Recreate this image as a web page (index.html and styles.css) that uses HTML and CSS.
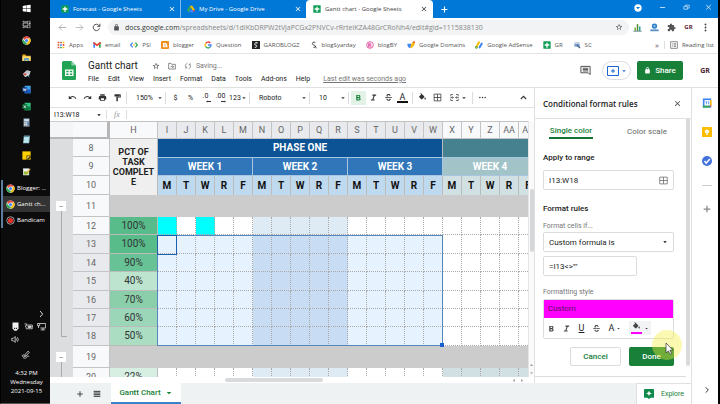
FILE: index.html
```html
<!DOCTYPE html>
<html lang="en">
<head>
<meta charset="utf-8">
<title>Gantt chart - Google Sheets</title>
<link rel="stylesheet" href="styles.css">
</head>
<body>
<svg class="defs" aria-hidden="true">
  <symbol id="chrome" viewBox="0 0 24 24"><circle cx="12" cy="12" r="11" fill="#fff"/><path d="M12 1a11 11 0 0 1 9.6 5.6H12a5.5 5.5 0 0 0-5.2 3.8L2.6 6.300A11 11 0 0 1 12 1z" fill="#ea4335"/><path d="M21.900 7.200A11 11 0 0 1 11.500 23l5-8.200a5.500 5.500 0 0 0-.6-7.600z" fill="#fbbc04"/><path d="M2.100 7.200A11 11 0 0 0 11 23l4-6.500a5.500 5.500 0 0 1-7.800-1.600z" fill="#34a853"/><circle cx="12" cy="12" r="4.300" fill="#4285f4"/></symbol>
  <symbol id="sheet" viewBox="0 0 24 24"><rect x="1" y="1" width="22" height="22" rx="1" fill="#0f9d58"/><path d="M10 5h4v5h5v4h-5v6h-4v-6H5v-4h5z" fill="#fff"/></symbol>
  <symbol id="drop" viewBox="0 0 24 24"><path d="M5 9l7 7 7-7z"/></symbol>
  <symbol id="close" viewBox="0 0 24 24"><path d="M19 6.400 17.600 5 12 10.600 6.400 5 5 6.400 10.600 12 5 17.600 6.400 19 12 13.400 17.600 19 19 17.600 13.400 12z"/></symbol>
  <symbol id="plus" viewBox="0 0 24 24"><path d="M20 13.500h-6.500V20h-3v-6.500H4v-3h6.500V4h3v6.500H20z"/></symbol>
  <symbol id="star" viewBox="0 0 24 24"><path d="M22 9.240l-7.190-.62L12 2 9.190 8.630 2 9.240l5.460 4.730L5.820 21 12 17.270 18.180 21l-1.630-7.030L22 9.240zM12 15.400l-3.760 2.270 1-4.280-3.320-2.880 4.380-.38L12 6.100l1.710 4.040 4.380.38-3.320 2.880 1 4.280L12 15.400z"/></symbol>
  <symbol id="lock" viewBox="0 0 24 24"><path d="M18 8h-1V6A5 5 0 0 0 7 6v2H6a2 2 0 0 0-2 2v10c0 1.100.9 2 2 2h12a2 2 0 0 0 2-2V10a2 2 0 0 0-2-2zM9 6a3 3 0 0 1 6 0v2H9z"/></symbol>
  <symbol id="fill" viewBox="0 0 24 24"><path d="M16.560 8.940L7.620 0 6.210 1.410l2.380 2.380-5.150 5.150a1.490 1.490 0 0 0 0 2.120l5.500 5.500c.29.29.68.44 1.060.44s.77-.15 1.060-.44l5.500-5.500c.59-.58.59-1.530 0-2.120zM19 11.500s-2 2.170-2 3.500a2 2 0 0 0 4 0c0-1.330-2-3.500-2-3.500z"/></symbol>
  <symbol id="strike" viewBox="0 0 24 24"><path d="M3 11h18v2H3zM17.500 7.500h-2.800c0-1.500-1-2.300-2.700-2.300-1.500 0-2.500.7-2.500 1.800 0 1 .8 1.600 2.500 2H7.300c-.5-.6-.7-1.300-.7-2 0-2.500 2.200-4.200 5.400-4.200 3.400 0 5.500 1.800 5.500 4.700zM6.300 15.500H9c.1 1.700 1.200 2.500 3.200 2.500 1.700 0 2.700-.7 2.700-1.800 0-.5-.1-.9-.5-1.200h3c.2.400.3.900.3 1.400 0 2.500-2.100 4.100-5.500 4.100-3.700 0-5.900-1.900-5.900-5z"/></symbol>
  <symbol id="italic" viewBox="0 0 24 24"><path d="M9 4v3h3.200l-3.400 10H5v3h10v-3h-3.200l3.400-10H19V4z"/></symbol>
  <symbol id="bold" viewBox="0 0 24 24"><path d="M15.600 11.800c1-.7 1.600-1.800 1.600-2.800 0-2.300-1.700-4-4-4H6v15h8c2.200 0 3.800-1.700 3.800-3.900 0-1.900-1-3.500-2.200-4.300zM9.300 7.500h3.200a1.500 1.500 0 0 1 0 3H9.300zm3.700 9.800H9.300v-3.500H13a1.700 1.700 0 0 1 0 3.500z"/></symbol>
  <symbol id="undo" viewBox="0 0 24 24"><path d="M12.500 8c-2.650 0-5.050.99-6.900 2.600L2 7v9h9l-3.620-3.620A8 8 0 0 1 12.500 10.500c3.540 0 6.550 2.310 7.600 5.500l2.370-.78A10.500 10.500 0 0 0 12.500 8z"/></symbol>
</svg>

<div class="desktop">
  <aside class="taskbar">
    <ul class="apps">
      <li><svg viewBox="0 0 24 24" fill="#fff"><path d="M2 5l9-1.500V11.500H2zM12 3.300 23 2v9.500H12zM2 12.500h9v8L2 19zM12 12.500h11V22l-11-1.500z"/></svg></li>
      <li><svg viewBox="0 0 24 24" fill="none" stroke="#ddd" stroke-width="2"><path d="M3 2v3h13V2M3 22v-3h13v3M3 8h13v8H3zM21 2v20M19 9h4"/></svg></li>
      <li><svg><use href="#chrome"/></svg></li>
      <li><svg viewBox="0 0 24 24"><path d="M1 4h8l2 3h12v14H1z" fill="#e8a920"/><path d="M1 9h22v12H1z" fill="#ffdb70"/><path d="M6 14h12v7h-3v-3H9v3H6z" fill="#2f8fd8"/></svg></li>
      <li><svg viewBox="0 0 24 24"><path d="M2 13 13 3l10 3-4 11-11 4z" fill="#dfe3e8"/><path d="M7 9l9-5 6 4-6 5z" fill="#b9bfc8"/><path d="M3 13c4-3 8-2 9 1s-3 4-8 2z" fill="#d14a3a"/><path d="M14 17l6 5" stroke="#5aa6d8" stroke-width="2"/></svg></li>
      <li><svg viewBox="0 0 24 24"><path d="M7 2h16v20H7z" fill="#41a5ee"/><path d="M7 12h16v10H7z" fill="#185abd"/><path d="M1 6h13v12H1z" fill="#103f91"/><path d="M3.500 9 5.500 15.500 7.500 10 9.500 15.500 11.500 9" fill="none" stroke="#fff" stroke-width="1.800"/></svg></li>
      <li><svg viewBox="0 0 24 24"><path d="M7 2h16v20H7z" fill="#33c481"/><path d="M7 12h16v10H7z" fill="#107c41"/><path d="M1 6h13v12H1z" fill="#0b6a37"/><path d="M4.500 9l6 7M10.500 9l-6 7" stroke="#fff" stroke-width="2"/></svg></li>
      <li><svg viewBox="0 0 24 24"><path d="M4 1h16v22H4z" fill="#8a9aa8"/><path d="M6 3h12v5H6z" fill="#c8e4f4"/><path d="M6 11h3v3H6zM11 11h3v3h-3zM6 16h3v3H6zM11 16h3v3h-3z" fill="#fff"/><path d="M15 11h3v8h-3z" fill="#3b78b5"/></svg></li>
      <li><svg viewBox="0 0 24 24"><path d="M5 2h16l-2 20H3z" fill="#a7dbe8"/><path d="M5 2h16v3H5z" fill="#5a8794"/><path d="M6 9h11M6 13h11M5 17h11" stroke="#dff4f8" stroke-width="1.500"/></svg></li>
      <li><svg viewBox="0 0 24 24"><path d="M1 1h22v22H1z" fill="#ffcf01"/><path d="M12 12h11v5l-6 6h-5z" fill="#3a3000"/><path d="M14 14h7l-7 7z" fill="#ffe471"/></svg></li>
      <li><svg viewBox="0 0 24 24"><path d="M3 3h16v19H3z" fill="#f2f4ea"/><path d="M5 12h12v8H5z" fill="#8dbb35"/><path d="M10 16 21 4l2 2-10 12z" fill="#e0ad35"/><path d="M3 3h16v2H3z" fill="#718090"/></svg></li>
    </ul>
    <ul class="windows">
      <li><svg><use href="#chrome"/></svg><span>Blogger: ...</span></li>
      <li class="current"><svg><use href="#chrome"/></svg><span>Gantt ch...</span></li>
      <li><svg viewBox="0 0 24 24"><circle cx="12" cy="12" r="10" fill="none" stroke="#ccc" stroke-width="2"/><circle cx="12" cy="12" r="7" fill="#e0302a"/></svg><span>Bandicam</span></li>
    </ul>
    <div class="tray">
      <svg class="tray-end" viewBox="0 0 24 24" fill="none" stroke="#fff" stroke-width="2.500"><path d="M9 3l8 9-8 9"/></svg>
      <svg viewBox="0 0 24 24"><path d="M4 1h16v16l-5 6H9l-5-6z" fill="#f0f0f0"/><path d="M8 17h3M13 17h3" stroke="#222" stroke-width="3"/></svg>
      <svg viewBox="0 0 24 24" fill="none" stroke="#ddd" stroke-width="2"><path d="M8 8h14v10H6v-4M22 11h2M1 5h6v5H4v4"/><path d="M11 11h8v4h-8z" fill="#ddd"/></svg>
      <svg viewBox="0 0 24 24" fill="none" stroke="#eee" stroke-width="2"><path d="M7 4h16v12H9M16 16v5M10 21h11M1 4h6v6H1zM4 10v6"/></svg>
      <svg viewBox="0 0 24 24" fill="none" stroke="#eee" stroke-width="2"><path d="M2 9h4l5-5v16l-5-5H2zM14 9q2 3 0 6M17 6q5 6 0 12"/></svg>
      <svg class="tray-pen" viewBox="0 0 24 24" fill="none" stroke="#eee" stroke-width="2"><path d="M9 14 19 3l3 3-9 11zM9 14c-3-3-7 0-5 3s7 1 9-3M6 21c4 2 8 1 10-3 1-3 5-3 5 0"/></svg>
    </div>
    <div class="clock"><span>4:32 PM</span><span>Wednesday</span><span>2021-09-15</span></div>
  </aside>

  <div class="browser">
    <nav class="tabs" aria-label="Browser tabs">
      <div class="tab"><svg><use href="#sheet"/></svg><span>Forecast - Google Sheets</span><button aria-label="Close tab"><svg><use href="#close"/></svg></button></div>
      <div class="tab divided"><svg viewBox="0 0 24 24"><path d="M8 2h8l8 13h-8z" fill="#fbbc04"/><path d="M8 2 0 15l4 7 8-13z" fill="#34a853"/><path d="M8 15h16l-4 7H4z" fill="#4285f4"/><path d="M18 15h6l-4 7z" fill="#ea4335"/></svg><span>My Drive - Google Drive</span><button aria-label="Close tab"><svg><use href="#close"/></svg></button></div>
      <div class="tab active"><svg><use href="#sheet"/></svg><span>Gantt chart - Google Sheets</span><button aria-label="Close tab"><svg><use href="#close"/></svg></button></div>
      <button class="new-tab" aria-label="New tab"><svg><use href="#plus"/></svg></button>
      <div class="window-buttons">
        <button aria-label="Search tabs"><svg viewBox="0 0 24 24"><circle cx="12" cy="12" r="11" fill="#fff"/><path d="M6 9h12l-6 7z" fill="#0078d7"/></svg></button>
        <button aria-label="Minimize"><svg viewBox="0 0 24 24" stroke="#fff" stroke-width="2.500"><path d="M3 12h18"/></svg></button>
        <button aria-label="Restore"><svg viewBox="0 0 24 24" fill="none" stroke="#fff" stroke-width="2"><path d="M3 8h12v10H3zM8 8V4h13v10h-6"/></svg></button>
        <button aria-label="Close"><svg viewBox="0 0 24 24" stroke="#fff" stroke-width="2.500"><path d="M4 3l16 16M20 3 4 19"/></svg></button>
      </div>
    </nav>

    <div class="address">
      <button aria-label="Back"><svg viewBox="0 0 24 24" fill="none" stroke="#999" stroke-width="2"><path d="M22 12H3M11 4l-8 8 8 8"/></svg></button>
      <button aria-label="Forward"><svg viewBox="0 0 24 24" fill="none" stroke="#aaa" stroke-width="2"><path d="M2 12h19M13 4l8 8-8 8"/></svg></button>
      <button aria-label="Reload"><svg viewBox="0 0 24 24" fill="none" stroke="#444" stroke-width="2.500"><path d="M20 14a8.500 8.500 0 1 1-2-8l3 3M21 2v7h-7"/></svg></button>
      <div class="omnibox"><svg fill="#555"><use href="#lock"/></svg><p><b>docs.google.com</b>/spreadsheets/d/1dIKbDRPW2tVjaPCGx2PNVCv-rRrteiKZA48GrCRoNh4/edit#gid=1115838130</p><svg fill="#555"><use href="#star"/></svg></div>
      <div class="extensions">
        <svg viewBox="0 0 24 24"><path d="M4 12h4v9H4z" fill="#7cb342"/><path d="M10 3h4v18h-4z" fill="#558b2f"/><path d="M16 9h4v12h-4z" fill="#26a69a"/><path d="M1 22h22" stroke="#546e7a" stroke-width="2"/></svg>
        <svg viewBox="0 0 24 24"><circle cx="12" cy="8" r="7" fill="#2b7bc4"/><circle cx="12" cy="8" r="3" fill="#9cc9ef"/><path d="M1 17h22v5H1z" fill="#5a93c8"/></svg>
        <svg viewBox="0 0 24 24" fill="#555"><path d="M20.500 11H19V7a2 2 0 0 0-2-2h-4V3.500a2.500 2.500 0 0 0-5 0V5H4a2 2 0 0 0-2 2v3.800h1.500a2.700 2.700 0 0 1 0 5.400H2V20c0 1.100.9 2 2 2h3.800v-1.500a2.700 2.700 0 0 1 5.400 0V22H17a2 2 0 0 0 2-2v-4h1.500a2.500 2.500 0 0 0 0-5z"/></svg>
        <span class="gr-small">GR</span>
        <svg viewBox="0 0 24 24" fill="#444"><circle cx="12" cy="4" r="2.500"/><circle cx="12" cy="12" r="2.500"/><circle cx="12" cy="20" r="2.500"/></svg>
      </div>
    </div>

    <nav class="bookmarks" aria-label="Bookmarks">
      <a href="#"><svg viewBox="0 0 24 24"><path d="M2 2h5v5H2zM2 17h5v5H2zM17 9h5v5h-5z" fill="#ea4335"/><path d="M9.500 2h5v5h-5zM2 9.500h5v5H2z" fill="#c0662a"/><path d="M17 2h5v5h-5zM17 17h5v5h-5z" fill="#fbbc04"/><path d="M9.500 9.500h5v5h-5z" fill="#4285f4"/><path d="M9.500 17h5v5h-5z" fill="#34a853"/></svg>Apps</a>
      <a href="#"><svg viewBox="0 0 24 24"><path d="M1 4h5v16H1z" fill="#4285f4"/><path d="M18 4h5v16h-5z" fill="#34a853"/><path d="M1 4h4l7 6 7-6h4v4l-11 8L1 8z" fill="#ea4335"/></svg>email</a>
      <a href="#"><svg viewBox="0 0 24 24" fill="none" stroke-width="4"><path d="M8 5l-6 7 6 7" stroke="#4285f4"/><path d="M16 5l6 7-6 7" stroke="#34a853"/><path d="M10 12h4" stroke="#fbbc04"/></svg>PSI</a>
      <a href="#"><svg viewBox="0 0 24 24"><rect width="24" height="24" rx="2" fill="#f09021"/><path d="M6 6h8q3 0 3 4 2 1 2 3v6H6z" fill="#fff"/><path d="M9 10h5M9 15h6" stroke="#f09021" stroke-width="2"/></svg>blogger</a>
      <a href="#"><svg viewBox="0 0 24 24" fill="none" stroke-width="4"><path d="M19 6a9 9 0 0 0-14 1" stroke="#ea4335"/><path d="M5 7a9 9 0 0 0 0 10" stroke="#fbbc04"/><path d="M5 17a9 9 0 0 0 13 2" stroke="#34a853"/><path d="M18 19a9 9 0 0 0 3-7h-9" stroke="#4285f4"/></svg>Question</a>
      <a href="#"><svg viewBox="0 0 24 24"><path d="M0 0h24v24H0z" fill="#222"/><path d="M15 5q-7-1-7 4t6 4v4q0 3-6 2M15 3v5" fill="none" stroke="#fff" stroke-width="2.500"/></svg>GAROBLOGZ</a>
      <a href="#"><svg viewBox="0 0 24 24" fill="none" stroke="#333" stroke-width="2.500"><path d="M16 4q-9-3-9 4c0 5 9 3 9 8q0 4-6 3M16 15l3 7"/></svg>blogSyarday</a>
      <a href="#"><svg viewBox="0 0 24 24" fill="none" stroke="#e0459b" stroke-width="2.500"><circle cx="12" cy="12" r="10"/><path d="M8 7h5q3 2 0 5H8zM8 12h6q3 3 0 6H8z"/></svg>blogBY</a>
      <a href="#"><svg viewBox="0 0 24 24"><path d="M1 8h12l-3 14q-9-3-9-14z" fill="#4285f4"/><path d="M13 8 23 0v8q-2 10-13 14z" fill="#fbbc04"/><path d="M15 4 23 0v6z" fill="#ea4335"/></svg>Google Domains</a>
      <a href="#"><svg viewBox="0 0 24 24" fill="none" stroke-linecap="round" stroke-width="6"><path d="M12 4 4 19" stroke="#fbbc04"/><path d="M20 8l-6 11" stroke="#4285f4"/><circle cx="4" cy="19" r="1" stroke="#34a853"/></svg>Google AdSense</a>
      <a href="#"><svg><use href="#sheet"/></svg>GR</a>
      <a href="#"><svg viewBox="0 0 24 24"><path d="M4 8h16v9H4z" fill="#7b9fd0"/><path d="M2 8 7 3h10l5 5z" fill="#c2cddd"/><path d="M12 12l9 9" stroke="#47668f" stroke-width="4"/></svg>SC</a>
      <a href="#" class="reading"><span class="more">»</span><svg viewBox="0 0 24 24" fill="none" stroke="#555" stroke-width="2"><path d="M2 2h20v20H2zM6 8h2M11 8h7M6 12h2M11 12h7M6 16h2M11 16h7"/></svg>Reading list</a>
    </nav>

    <header class="doc">
      <svg class="logo" viewBox="0 0 28 38"><path d="M3 0h16l9 9v26q0 3-3 3H3q-3 0-3-3V3q0-3 3-3z" fill="#23a455"/><path d="M19 0l9 9h-9z" fill="#8ed1b1"/><path d="M6 17h17v13H6zM8.500 19.500v3h4.700v-3zM15.700 19.500v3h4.700v-3zM8.500 24.800v3h4.700v-3zM15.700 24.800v3h4.700v-3z" fill="#fff" fill-rule="evenodd"/></svg>
      <div class="doc-main">
        <div class="doc-title">
          <h1>Gantt chart</h1>
          <svg fill="#444"><use href="#star"/></svg>
          <svg viewBox="0 0 24 24" fill="none" stroke="#555" stroke-width="2"><path d="M2 4h7l2 3h11v14H2zM8 14h8M13 10l4 4-4 4"/></svg>
          <span class="saving"><svg viewBox="0 0 24 24" fill="none" stroke="#777" stroke-width="2"><path d="M10 4a8 8 0 0 0-4 13M3 18h5v-5M14 20a8 8 0 0 0 4-13M21 6h-5v5"/></svg>Saving...</span>
        </div>
        <nav class="menu"><a href="#">File</a><a href="#">Edit</a><a href="#">View</a><a href="#">Insert</a><a href="#">Format</a><a href="#">Data</a><a href="#">Tools</a><a href="#">Add-ons</a><a href="#">Help</a><a href="#" class="last-edit">Last edit was seconds ago</a></nav>
      </div>
      <button class="comment" aria-label="Comments"><svg viewBox="0 0 24 24" fill="none" stroke="#444" stroke-width="2"><path d="M2 3h20v18l-4-4H2zM6 7h12M6 10h12M6 13h12"/></svg></button>
      <button class="present" aria-label="Present"><svg viewBox="0 0 24 20" fill="none" stroke="#1a67d2" stroke-width="2"><path d="M1 1h22v18H1zM12 6v8M8 10h8"/></svg><svg class="arrow" fill="#1a67d2"><use href="#drop"/></svg></button>
      <button class="share"><svg fill="#fff"><use href="#lock"/></svg>Share</button>
      <span class="avatar">GR</span>
    </header>

    <div class="workspace">
      <div class="editor">
        <div class="editor-main">
          <main class="sheet">
            <div class="toolbar">
              <button aria-label="Undo"><svg><use href="#undo"/></svg></button>
              <button aria-label="Redo"><svg class="flip"><use href="#undo"/></svg></button>
              <button aria-label="Print"><svg viewBox="0 0 24 24"><path d="M19 8H5a3 3 0 0 0-3 3v6h4v4h12v-4h4v-6a3 3 0 0 0-3-3zm-3 11H8v-5h8zM18 3H6v4h12z"/></svg></button>
              <button aria-label="Paint format"><svg viewBox="0 0 24 24"><path d="M18 4V3H4v6h14V6h1v4H9v12h4V12h8V4z"/></svg></button>
              <i></i>
              <button class="pick zoom">150%<svg class="arrow"><use href="#drop"/></svg></button>
              <i></i>
              <button>$</button><button>%</button>
              <button class="decimal" aria-label="Decrease decimals">.0<svg viewBox="0 0 24 10"><path d="M0 5l7-5v3h17v4H7v3z"/></svg></button>
              <button class="decimal" aria-label="Increase decimals">.00<svg viewBox="0 0 24 10"><path d="M24 5l-7-5v3H0v4h17v3z"/></svg></button>
              <button class="formats">123<svg class="arrow"><use href="#drop"/></svg></button>
              <i></i>
              <button class="pick font">Roboto<svg class="arrow"><use href="#drop"/></svg></button>
              <i></i>
              <button class="pick size">10<svg class="arrow"><use href="#drop"/></svg></button>
              <i></i>
              <button class="on" aria-label="Bold"><svg><use href="#bold"/></svg></button>
              <button aria-label="Italic"><svg><use href="#italic"/></svg></button>
              <button aria-label="Strikethrough"><svg><use href="#strike"/></svg></button>
              <button class="text-color" aria-label="Text color">A</button>
              <i></i>
              <button aria-label="Fill color"><svg><use href="#fill"/></svg></button>
              <button aria-label="Borders"><svg viewBox="0 0 24 24" fill="none" stroke="#333" stroke-width="2"><path d="M3 3h18v18H3zM12 3v18M3 12h18"/></svg></button>
              <button class="merge" aria-label="Merge cells"><svg viewBox="0 0 24 24" fill="none" stroke="#444" stroke-width="2"><path d="M8 4H2v5M16 4h6v5M8 20H2v-5M16 20h6v-5M1 12h8M6 9l3 3-3 3M23 12h-8M18 9l-3 3 3 3"/></svg><svg class="arrow"><use href="#drop"/></svg></button>
              <i></i>
              <button aria-label="More"><svg viewBox="0 0 24 24"><circle cx="5" cy="12" r="2"/><circle cx="12" cy="12" r="2"/><circle cx="19" cy="12" r="2"/></svg></button>
              <button class="collapse" aria-label="Hide menus"><svg viewBox="0 0 24 24" fill="none" stroke="#333" stroke-width="3"><path d="M5 16l7-7 7 7"/></svg></button>
            </div>
            <div class="formula">
              <input class="name-box" aria-label="Name box" value="I13:W18"><svg class="arrow"><use href="#drop"/></svg>
              <label for="fx">fx</label><input id="fx" value="">
            </div>
            <div class="canvas">
              <div class="outline">
                <div class="outline-head"></div>
                <div class="group"><button aria-label="Collapse rows 12 to 18">–</button><span></span></div>
                <div class="group last"><button aria-label="Collapse rows from 20">–</button><span></span></div>
              </div>
              <div class="grid">
                <table>
                  <colgroup><col class="c-num"><col class="c-pct"><col span="20"></colgroup>
                  <thead><tr><th class="corner"></th><th>H</th><th>I<th>J<th>K<th>L<th>M<th>N<th>O<th>P<th>Q<th>R<th>S<th>T<th>U<th>V<th>W<th>X<th>Y<th>Z<th>AA<th>AB</tr></thead>
                  <tbody>
                    <tr class="phase"><th>8</th><td class="pct-head" rowspan="3">PCT OF TASK COMPLETE</td><td colspan="15">PHASE ONE</td><td colspan="5" class="teal"></td></tr>
                    <tr class="week tall"><th>9</th><td colspan="5">WEEK 1</td><td colspan="5">WEEK 2</td><td colspan="5">WEEK 3</td><td colspan="5" class="teal">WEEK 4</td></tr>
                    <tr class="days tall"><th>10</th><td>M<td>T<td>W<td>R<td>F<td>M<td>T<td>W<td>R<td>F<td>M<td>T<td>W<td>R<td>F<td class="teal">M<td class="teal">T<td class="teal">W<td class="teal">R<td class="teal">F</tr>
                    <tr class="band"><th>11</th><td colspan="21"></td></tr>
                    <tr class="task"><th>12</th><td class="p100">100%<td class="cyan"><td><td class="cyan"><td><td><td><td><td><td><td><td><td><td><td><td><td><td><td><td><td></tr>
                    <tr class="task picked tall"><th>13</th><td class="p100">100%<td><td><td><td><td><td><td><td><td><td><td><td><td><td><td><td><td><td><td><td></tr>
                    <tr class="task picked"><th>14</th><td class="p90">90%<td><td><td><td><td><td><td><td><td><td><td><td><td><td><td><td><td><td><td><td></tr>
                    <tr class="task picked tall"><th>15</th><td class="p40">40%<td><td><td><td><td><td><td><td><td><td><td><td><td><td><td><td><td><td><td><td></tr>
                    <tr class="task picked"><th>16</th><td class="p70">70%<td><td><td><td><td><td><td><td><td><td><td><td><td><td><td><td><td><td><td><td></tr>
                    <tr class="task picked"><th>17</th><td class="p60">60%<td><td><td><td><td><td><td><td><td><td><td><td><td><td><td><td><td><td><td><td></tr>
                    <tr class="task picked tall"><th>18</th><td class="p50">50%<td><td><td><td><td><td><td><td><td><td><td><td><td><td><td><td><td><td><td><td></tr>
                    <tr class="band"><th>19</th><td colspan="21"></td></tr>
                    <tr class="task next"><th>20</th><td class="p20">22%<td><td><td><td><td><td><td><td><td><td><td><td><td><td><td><td><td><td><td><td></tr>
                  </tbody>
                </table>
                <div class="selection"></div>
              </div>
              <div class="scroll-y"><span class="thumb"></span><svg><use href="#drop"/></svg><svg><use href="#drop"/></svg></div>
            </div>
            <div class="scroll-x"><span class="thumb"></span><svg><use href="#drop"/></svg><svg><use href="#drop"/></svg></div>
          </main>

          <section class="panel" aria-label="Conditional format rules">
            <div class="panel-head"><h2>Conditional format rules</h2><button aria-label="Close"><svg><use href="#close"/></svg></button></div>
            <div class="panel-scroll">
              <form class="rules">
                <div class="rule-tabs"><button type="button" class="active">Single color</button><button type="button">Color scale</button></div>
                <label class="heading" for="range">Apply to range</label>
                <div class="field"><input id="range" value="I13:W18"><svg viewBox="0 0 24 24" fill="none" stroke="#666" stroke-width="2"><path d="M2 3h20v18H2zM12 3v18M2 12h20"/></svg></div>
                <h3 class="heading rules-title">Format rules</h3>
                <label class="note" for="cond">Format cells if...</label>
                <div class="field"><select id="cond"><option>Custom formula is</option></select><svg class="arrow"><use href="#drop"/></svg></div>
                <div class="field formula-field"><input aria-label="Formula" value='=I13&lt;&gt;""'></div>
                <span class="note style-note">Formatting style</span>
                <div class="style-box">
                  <div class="preview">Custom</div>
                  <div class="style-tools">
                    <button type="button" aria-label="Bold"><svg><use href="#bold"/></svg></button>
                    <button type="button" aria-label="Italic"><svg><use href="#italic"/></svg></button>
                    <button type="button" class="underline">U</button>
                    <button type="button" aria-label="Strikethrough"><svg><use href="#strike"/></svg></button>
                    <button type="button" class="wide" aria-label="Text color">A<svg class="arrow"><use href="#drop"/></svg></button>
                    <button type="button" class="wide fill-button" aria-label="Fill color"><svg class="magenta"><use href="#fill"/></svg><svg class="arrow"><use href="#drop"/></svg></button>
                  </div>
                </div>
                <div class="actions"><button type="button">Cancel</button><button type="button" class="done">Done</button></div>
              </form>
              <div class="panel-bar"></div>
            </div>
            <svg class="cursor" viewBox="0 0 30 30"><circle cx="15" cy="15" r="15" fill="#f5f03c" fill-opacity=".4"/><path d="M14 13v10l2.300-2.100 1.700 3.500 1.600-.8-1.700-3.400H21z" fill="#fff" stroke="#333" stroke-width=".7"/></svg>
          </section>
        </div>
        <footer class="bottom">
          <button aria-label="Add sheet"><svg><use href="#plus"/></svg></button>
          <button aria-label="All sheets"><svg viewBox="0 0 24 24" stroke="#333" stroke-width="3"><path d="M2 4h20M2 9h20M2 14h20M2 19h20"/></svg></button>
          <button class="sheet-tab">Gantt Chart<svg class="arrow"><use href="#drop"/></svg></button>
          <button class="explore"><svg viewBox="0 0 24 24"><path d="M2 0h20q2 0 2 2v17q0 2-2 2h-6l-4 3-4-3H2q-2 0-2-2V2q0-2 2-2z" fill="#0f8a4c"/><path d="M12 4l2 4.500L19 10.500l-5 2L12 17l-2-4.500-5-2 5-2z" fill="#fff"/></svg>Explore</button>
        </footer>
      </div>
      <aside class="rail">
        <svg viewBox="0 0 24 24"><path d="M2 1h20v22H2z" fill="#4285f4"/><path d="M19 5h4v13h-4z" fill="#fbbc04"/><path d="M2 18h17v5H2z" fill="#34a853"/><path d="M19 18h4l-4 5z" fill="#ea4335"/><path d="M6 5h13v13H6z" fill="#fff"/><path d="M8 9h3v6M14 9h2v6" fill="none" stroke="#4285f4" stroke-width="2"/></svg>
        <svg viewBox="0 0 24 24"><rect width="24" height="24" rx="2" fill="#fbbc04"/><circle cx="12" cy="11" r="5" fill="#fff"/><path d="M9.500 17h5v2h-5z" fill="#fff"/></svg>
        <svg viewBox="0 0 24 24"><circle cx="12" cy="12" r="12" fill="#4472dc"/><path d="M6 12l4 5 9-10" fill="none" stroke="#fff" stroke-width="3.500"/></svg>
        <hr>
        <svg fill="#888" class="add"><use href="#plus"/></svg>
        <svg class="expand" viewBox="0 0 24 24" fill="none" stroke="#333" stroke-width="3"><path d="M8 4l8 8-8 8"/></svg>
      </aside>
    </div>
  </div>
</div>
</body>
</html>
```

FILE: styles.css
```css
*, ::before, ::after { box-sizing: border-box; margin: 0; padding: 0; }
body { font-family: Roboto, "Liberation Sans", sans-serif; font-size: 8px; color: #222; background: #000; overflow: hidden; }
button, input, select { font: inherit; color: inherit; border: 0; background: none; outline: 0; }
button { display: flex; align-items: center; justify-content: center; }
a { color: inherit; text-decoration: none; }
ul { list-style: none; }
svg { display: block; flex: none; width: 9px; height: 9px; }
svg.arrow { width: 6px; height: 6px; }
.defs { position: absolute; width: 0; height: 0; }
.desktop { display: flex; height: 100vh; padding-right: 2px; }

/* Windows taskbar */
.taskbar { display: flex; flex-direction: column; width: 50px; background: #0c0c0c; color: #fff; font-family: "Open Sans", sans-serif; font-size: 6px; border-left: 1px solid #000; border-bottom: 1px solid #555; }
.apps { display: grid; grid-auto-rows: 1fr; height: 180px; place-items: center; padding-left: 2px; }
.windows li { display: flex; align-items: center; gap: 2px; height: 16px; padding-left: 3px; border-left: 2px solid #5d7f9f; white-space: nowrap; }
.windows .current { background: #333; }
.tray { display: grid; grid-template-columns: repeat(3, 13px); justify-content: center; place-items: center; grid-auto-rows: 13px; margin: auto 0 4px; padding-left: 5px; }
.tray-end { grid-column: 3; width: 8px; height: 8px; }
.tray-pen { grid-column: 1 / -1; margin-top: 4px; margin-right: 5px; }
.clock { display: grid; text-align: center; line-height: 9px; padding: 6px 0 7px 2px; }

/* Browser chrome */
.browser { display: flex; flex-direction: column; flex: 1; min-width: 0; background: #fff; }
.tabs, .address, .bookmarks { font-family: "Open Sans", sans-serif; }
.tabs { display: flex; height: 18px; padding-left: 10px; background: #0078d7; color: #fff; font-size: 6px; }
.tab { display: flex; align-items: center; gap: 4px; width: 120px; padding-left: 1px; white-space: nowrap; }
.tab button { margin-left: auto; margin-right: 4px; fill: #fff; }
.tab svg { width: 8px; height: 8px; }
.divided { width: 126px; padding-left: 6px; border-left: 1px solid #7cb9ec; background-clip: padding-box; }
.active.tab { width: 127px; padding-left: 7px; background: #fff; color: #444; border-radius: 4px 4px 0 0; }
.active.tab button { fill: #333; margin-right: 5px; }
.new-tab { width: 22px; fill: #fff; }
.window-buttons { display: flex; margin-left: auto; padding-bottom: 3px; }
.window-buttons button { width: 24px; }
.window-buttons button:last-child { width: 20px; }
.window-buttons svg { width: 7px; height: 7px; }
.window-buttons button:first-child svg { width: 8px; height: 8px; }
.address { display: flex; align-items: center; height: 18px; padding: 0 4px; }
.address > button { width: 17px; }
.omnibox { display: flex; align-items: center; flex: 1; min-width: 0; gap: 5px; height: 15px; margin-left: 3px; padding: 0 6px 0 5px; border-radius: 8px; background: #f1f3f4; font-size: 7px; color: #888; }
.omnibox p { flex: 1; overflow: hidden; white-space: nowrap; }
.omnibox b { font-weight: 400; color: #333; }
.omnibox svg { width: 8px; height: 8px; }
.omnibox svg:first-child { width: 7px; height: 7px; }
.extensions { display: grid; grid-template-columns: repeat(5, 17px); place-items: center; }
.gr-small { color: #5b2030; font-size: 6px; font-weight: 700; }
.bookmarks { display: flex; align-items: center; gap: 10px; height: 18px; padding: 0 4px 0 7px; border-bottom: 1px solid #e4e4e4; font-size: 6px; color: #555; white-space: nowrap; }
.bookmarks a { display: flex; align-items: center; gap: 4px; }
.bookmarks svg { width: 8px; height: 8px; }
.bookmarks .reading { margin-left: auto; }
.more { padding-right: 5px; margin-right: 1px; border-right: 1px solid #ddd; font-size: 8px; line-height: 8px; }

/* Document header */
.doc { display: flex; align-items: center; height: 34px; padding: 0 8px 0 12px; border-bottom: 1px solid #e0e0e0; }
.logo { width: 14px; height: 19px; }
.doc-main { flex: 1; margin-left: 12px; padding-top: 3px; }
.doc-title { display: flex; align-items: center; gap: 8px; height: 14px; }
.doc-title svg { width: 8px; height: 8px; }
.doc-title h1 { font: 400 10px Roboto, sans-serif; margin-right: 6px; }
.saving { display: flex; align-items: center; gap: 4px; color: #777; font-size: 7px; }
.menu { display: flex; gap: 9px; font-size: 7px; line-height: 13px; white-space: nowrap; }
.last-edit { margin-left: 4px; color: #777; text-decoration: underline; }
.comment { margin-right: 11px; }
.comment svg { width: 11px; height: 11px; }
.present { gap: 2px; width: 29px; height: 19px; border: 1px solid #dadce0; border-radius: 10px; }
.present svg:first-child { width: 12px; height: 10px; }
.share { gap: 4px; width: 46px; height: 19px; margin: 0 12px 0 6px; border-radius: 2px; background: #188038; color: #fff; font-weight: 500; }
.share svg { width: 7px; height: 7px; }
.avatar { width: 15px; color: #4a2430; font: 700 7px "Open Sans", sans-serif; text-align: right; }

/* Workspace */
.workspace, .editor-main { display: flex; flex: 1; min-height: 0; }
.editor { display: flex; flex-direction: column; flex: 1; min-width: 0; }
.sheet { display: flex; flex-direction: column; flex: 1; min-width: 0; }
.toolbar { display: flex; align-items: center; height: 20px; padding: 0 3px 0 15px; border-bottom: 1px solid #e0e0e0; font-size: 7px; fill: #333; }
.toolbar > i { width: 1px; height: 12px; margin: 0 2px 0 1px; background: #dadce0; }
.toolbar button { width: 15px; height: 14px; }
.toolbar .pick { justify-content: space-between; padding: 0 1px 0 7px; }
.toolbar .zoom, .toolbar .size { width: 35px; }
.toolbar .font { width: 56px; }
.toolbar .formats { width: 20px; }
.toolbar .merge { width: 26px; gap: 2px; }
.toolbar .on { background: #e2f2e7; fill: #188038; }
.toolbar .text-color { width: 11px; height: 11px; margin: 0 3px 0 1px; font-size: 9px; border-bottom: 2px solid #111; }
.toolbar .decimal { flex-direction: column; font-size: 7px; line-height: 7px; }
.decimal svg { width: 5px; height: 3px; margin-left: 5px; }
.flip { transform: scaleX(-1); }
.toolbar .collapse { margin-left: auto; }
.formula { display: flex; align-items: center; height: 13px; padding-left: 4px; font-size: 7px; }
.name-box { width: 42px; }
.formula label { margin: 0 5px 0 4px; padding: 0 6px 0 7px; border: 1px solid #ddd; border-width: 0 1px; color: #999; font: italic 8px "Liberation Serif", serif; }
#fx { flex: 1; }
.canvas { display: flex; flex: 1; min-height: 0; }
.outline { width: 23px; background: #dcddde; overflow: hidden; }
.outline-head { height: 18px; margin-bottom: 62px; background: #f4f5f6; border-top: 1px solid #ccc; border-bottom: 2px solid #b7b7b7; }
.group { height: 136px; margin-bottom: 15px; padding-left: 6px; }
.group button { width: 10px; height: 10px; background: #fff; color: #777; }
.group span { display: block; width: 6px; height: 126px; margin-left: 5px; border: 1px solid #aaa; border-width: 0 0 1px 1px; }
.grid { position: relative; flex: 1; min-width: 0; overflow: hidden; }
table { width: 465px; table-layout: fixed; border-collapse: separate; border-spacing: 0; text-align: center; font-size: 10px; line-height: 10px; }
.c-num { width: 37px; }
.c-pct { width: 48px; }
tr { height: 18px; }
tr.tall { height: 19px; }
tr.band { height: 22px; }
th { font-size: 9px; font-weight: 400; color: #666; background: #f8f9fa; border: 1px solid #c4c4c4; border-width: 0 1px 1px 0; }
thead th { border-top-width: 1px; background: #e8eaed; }
thead th:nth-child(2), thead th:nth-child(n+18) { background: #f8f9fa; }
thead .corner { background: #f8f9fa; border-right: 3px solid #b7b7b7; border-bottom: 2px solid #b7b7b7; }
td { border: 0 solid #bbb; }
.picked th { background: #e8eaed; }
.phase td { background: #0b5394; color: #fff; font-weight: 700; border-right-width: 1px; }
.phase td.teal { background: #45818e; }
.phase td.pct-head { padding: 0 2px; background: #efefef; color: #222; font-size: 9px; line-height: 10px; overflow-wrap: anywhere; }
.week td { background: #3076b8; color: #fff; font-weight: 700; border-width: 1px 1px 1px 0; border-color: #a9c6e0; }
.week td.teal { background: #a2c4c9; }
.days td { background: #bfd9ee; color: #111; font-weight: 700; border-right-width: 1px; }
.days td.teal { background: #d0e0e3; }
.band td { background: #ccc; }
.task td { border-right: 1px dotted #aaa; border-bottom: 1px dotted #aaa; }
.task td:nth-child(2) { border-right: 1px solid #bbb; border-bottom: 1px solid #bbb; color: #333; }
.task td:nth-child(n+8):nth-child(-n+12) { background: #deeaf4; }
.picked td:nth-child(n+3):nth-child(-n+17) { background: #e6f2fd; }
.picked td:nth-child(n+8):nth-child(-n+12) { background: #c8dcf4; }
.next td:nth-child(n+18) { background: #d0e0e3; }
.task td.cyan { background: #0ff; }
.p100 { background: #57bb8a; }
.p90 { background: #67c295; }
.p70 { background: #8acfaa; }
.p60 { background: #9ad6b7; }
.p50 { background: #abddc3; }
.p40 { background: #bce4cf; }
.p20 { background: #d7efe3; }
/* Outline of the selected range, with the active cell in its corner */
.selection { position: absolute; left: 84px; top: 114px; width: 286px; height: 111px; border: 1px solid #5587bd; }
.selection::before { content: ""; position: absolute; left: -1px; top: -1px; width: 20px; height: 20px; border: 1px solid #1b5fae; }
.selection::after { content: ""; position: absolute; right: -2px; bottom: -2px; width: 4px; height: 4px; background: #1a5fd0; }
.scroll-y { display: flex; flex-direction: column; align-items: center; width: 6px; border-left: 1px solid #e4e4e4; background: #fafafa; fill: #777; }
.scroll-y .thumb { width: 4px; height: 63px; margin: 68px 0 auto; border-radius: 2px; background: #d4d6d8; }
.scroll-y svg, .scroll-x svg { width: 5px; height: 8px; }
.scroll-y svg:first-of-type { transform: rotate(180deg); }
.scroll-x { display: flex; align-items: center; height: 6px; padding-right: 8px; fill: #777; }
.scroll-x .thumb { width: 98px; height: 4px; margin: 0 auto 0 175px; border-radius: 2px; background: #d8dadc; }
.scroll-x svg { width: 8px; height: 5px; transform: rotate(90deg); }
.scroll-x svg:last-child { transform: rotate(-90deg); }

/* Conditional format panel */
.panel { position: relative; display: flex; flex-direction: column; width: 158px; padding-bottom: 6px; border-left: 1px solid #e0e0e0; border-right: 1px solid #e0e0e0; }
.panel-head { display: flex; align-items: center; justify-content: space-between; height: 31px; padding: 0 9px 0 8px; border-bottom: 1px solid #e0e0e0; }
.panel-head h2 { font: 600 8px "Open Sans", sans-serif; }
.panel-head svg { fill: #444; }
.panel-scroll { display: flex; flex: 1; min-height: 0; }
.rules { flex: 1; padding: 4px 12px 0 8px; border-bottom: 1px solid #ddd; }
.panel-bar { width: 4px; height: 247px; margin: 0 1px 0 0; border-radius: 0 0 2px 2px; background: #d8dadc; }
.rule-tabs { display: flex; justify-content: space-between; padding: 0 5px 0 6px; color: #666; }
.rule-tabs button { width: 44px; height: 16px; white-space: nowrap; }
.rule-tabs .active { color: #188038; font-weight: 500; border-bottom: 2px solid #137333; }
.heading { display: block; margin-top: 13px; margin-bottom: 6px; font-size: 8px; line-height: 12px; font-weight: 500; }
.note { display: block; color: #777; font-size: 7px; line-height: 11px; }
.field { display: flex; align-items: center; height: 20px; padding: 0 5px; border: 1px solid #dadce0; border-radius: 2px; }
.field input, .field select { flex: 1; min-width: 0; appearance: none; }
.formula-field { width: 94px; margin-top: 4px; }
.style-note { margin: 11px 0 1px; }
.style-box { border: 1px solid #dadce0; border-radius: 2px; }
.preview { padding-left: 4px; line-height: 18px; background: #f0f; color: #5a1060; }
.style-tools { display: flex; height: 20px; align-items: center; fill: #444; }
.style-tools button { width: 15px; height: 14px; }
.style-tools .underline { font-size: 9px; text-decoration: underline; }
.style-tools .wide { width: 22px; gap: 2px; font-size: 9px; }
.style-tools .arrow { width: 5px; height: 5px; }
.style-tools .fill-button { margin-left: 3px; background: #f1f3f4; }
.style-tools .magenta { height: 12px; padding-bottom: 1px; border-bottom: 2px solid #f0f; width: 11px; }
.actions { display: flex; justify-content: flex-end; gap: 8px; margin-top: 8px; }
.actions button { width: 51px; height: 19px; border: 1px solid #dadce0; border-radius: 2px; color: #188038; font-weight: 500; }
.actions .done { width: 45px; border: 0; background: #188038; color: #fff; }
.cursor { position: absolute; left: 117px; top: 242px; width: 30px; height: 30px; }

.bottom { display: flex; height: 21px; padding-left: 21px; background: #eef2f2; fill: #444; }
.bottom button { width: 17px; }
.bottom svg { width: 8px; height: 8px; }
.bottom .sheet-tab { gap: 4px; width: 70px; margin-left: 6px; background: #fff; border-bottom: 2px solid #3b82c8; color: #188038; fill: #188038; font-weight: 500; }
.bottom .explore { gap: 7px; width: 56px; margin-left: auto; background: #fff; border: 1px solid #e0e0e0; border-width: 1px 1px 0; color: #188038; font-size: 7px; }
.bottom .explore svg { width: 10px; height: 10px; }
.rail { display: flex; flex-direction: column; align-items: center; gap: 19px; width: 26px; padding: 10px 0 10px 4px; }
.rail svg { width: 10px; height: 10px; }
.rail hr { width: 10px; margin-bottom: -1px; border: 0; border-top: 1px solid #ccc; }
.rail .expand { width: 8px; height: 8px; margin-top: auto; }
```
